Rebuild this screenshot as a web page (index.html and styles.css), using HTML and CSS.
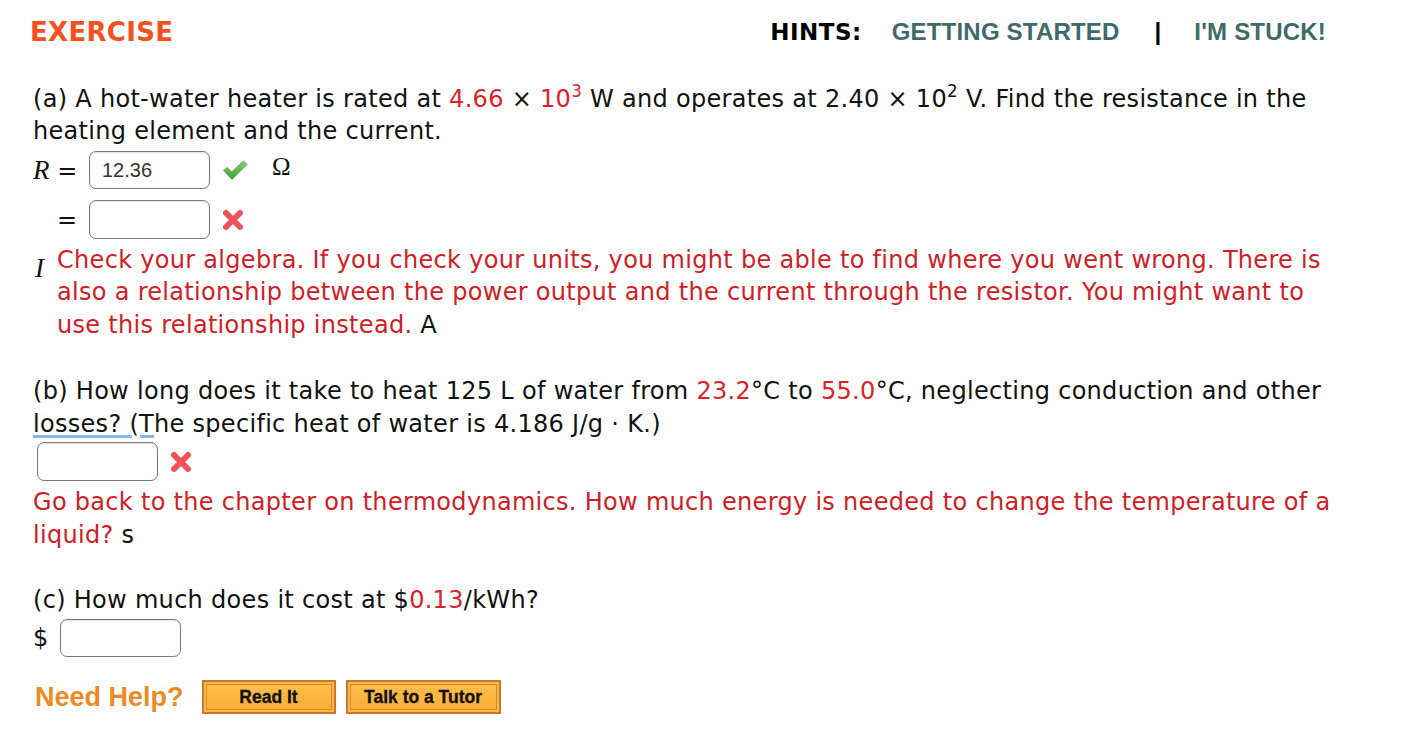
FILE: index.html
```html
<!DOCTYPE html>
<html>
<head>
<meta charset="utf-8">
<link rel="stylesheet" href="styles.css">
</head>
<body>
<div class="page">
  <header class="top">
    <div class="title">EXERCISE</div>
    <div class="hints">
      <span class="hints-label">HINTS:</span>
      <span class="hint-link">GETTING STARTED</span>
      <span class="sep">|</span>
      <span class="hint-link">I'M STUCK!</span>
    </div>
  </header>

  <p class="q q-a">(a) A hot-water heater is rated at <span class="red">4.66</span> × <span class="red">10<sup>3</sup></span> W and operates at 2.40 × 10<sup>2</sup> V. Find the resistance in the heating element and the current.</p>

  <div class="row row-r">
    <div class="lbl"><span class="var">R</span> =</div>
    <div class="box"><span class="val">12.36</span></div>
    <svg class="icon check" viewBox="0 0 26 22" width="26" height="22"><defs><linearGradient id="gc" x1="0" y1="0" x2="0" y2="1"><stop offset="0" stop-color="#8fd07a"/><stop offset="1" stop-color="#3f9a3a"/></linearGradient></defs><path d="M1.5 11.5 L5.5 8.5 L9.5 13 L21.5 2 L25 5.5 L10 20.5 Z" fill="url(#gc)" stroke="#4a9d45" stroke-width="0.8" stroke-linejoin="round"/></svg>
    <span class="unit">Ω</span>
  </div>

  <div class="row row-i">
    <div class="lbl">=</div>
    <div class="box"></div>
    <svg class="icon cross" viewBox="0 0 22 22" width="22" height="22"><path d="M4 4 L18 18 M18 4 L4 18" stroke="#f0525c" stroke-width="6" stroke-linecap="round"/></svg>
  </div>

  <div class="hint-block">
    <div class="ilabel"><span class="var">I</span></div>
    <div class="red-text hint-text">Check your algebra. If you check your units, you might be able to find where you went wrong. There is also a relationship between the power output and the current through the resistor. You might want to use this relationship instead. <span class="blk">A</span></div>
  </div>

  <p class="q q-b">(b) How long does it take to heat 125 L of water from <span class="red">23.2</span>°C to <span class="red">55.0</span>°C, neglecting conduction and other <span class="spell">losses? (T</span>he specific heat of water is 4.186 J/g · K.)</p>

  <div class="row row-b">
    <div class="box"></div>
    <svg class="icon cross" viewBox="0 0 22 22" width="22" height="22"><path d="M4 4 L18 18 M18 4 L4 18" stroke="#f0525c" stroke-width="6" stroke-linecap="round"/></svg>
  </div>

  <p class="red-text fb-b">Go back to the chapter on thermodynamics. How much energy is needed to change the temperature of a liquid? <span class="blk">s</span></p>

  <p class="q q-c">(c) How much does it cost at $<span class="red">0.13</span>/kWh?</p>

  <div class="row row-c">
    <span class="dollar">$</span>
    <div class="box"></div>
  </div>

  <div class="help">
    <span class="need">Need Help?</span>
    <span class="btn btn-read">Read It</span>
    <span class="btn btn-tutor">Talk to a Tutor</span>
  </div>
</div>
</body>
</html>
```

FILE: styles.css
```css
* { box-sizing: border-box; }

body {
  margin: 0;
  background: #ffffff;
  color: #111111;
  font-family: "DejaVu Sans", Verdana, sans-serif;
  font-size: 24px;
}

.page {
  padding: 16px 0 0 33px;
  width: 1360px;
}

.q, .red-text {
  letter-spacing: 0.3px;
}

.top {
  display: flex;
  align-items: center;
  height: 32px;
}

.title {
  margin-left: -3px;
  font-family: "DejaVu Sans", Verdana, sans-serif;
  font-weight: bold;
  font-size: 26px;
  letter-spacing: 0.3px;
  color: #f4511e;
}

.hints {
  margin-left: auto;
  margin-right: 34px;
  display: flex;
  align-items: center;
  font-family: "Liberation Sans", Arial, sans-serif;
  font-weight: bold;
  font-size: 24px;
}

.hints-label {
  font-family: "DejaVu Sans", Verdana, sans-serif;
  font-size: 23px;
  letter-spacing: 0.5px;
  color: #000;
  margin-right: 30px;
}

.hint-link {
  color: #3e6a6a;
  letter-spacing: 0.2px;
}

.sep {
  color: #000;
  margin: 0 33px 0 35px;
}

.q {
  margin: 0;
  line-height: 32.5px;
}

.q-a { margin-top: 34.5px; }

sup {
  font-size: 0.7em;
  line-height: 0;
  vertical-align: 0.62em;
}

.red { color: #d9232a; }
.blk { color: #111; }

.row {
  display: flex;
  align-items: center;
  height: 38px;
}

.row-r { margin-top: 3.5px; }
.row-i { margin-top: 11px; height: 39px; }

.lbl {
  width: 44px;
  flex: none;
  white-space: nowrap;
  text-align: right;
  margin-right: 12px;
  font-size: 24px;
}

.var {
  font-family: "Liberation Serif", "Times New Roman", serif;
  font-style: italic;
  font-size: 27px;
}

.box {
  width: 121px;
  flex: none;
  height: 100%;
  border: 1px solid #7a7a7a;
  border-radius: 7px;
  background: #fff;
  box-shadow: inset 0 1px 2px rgba(0,0,0,0.12);
  display: flex;
  align-items: center;
  padding-left: 12px;
}

.val {
  font-family: "Liberation Sans", Arial, sans-serif;
  font-size: 20px;
  color: #333;
}

.icon { margin-left: 12px; flex: none; }

.unit {
  margin-left: 24px;
  font-family: "Liberation Serif", "Times New Roman", serif;
  font-size: 25px;
  margin-top: -6px;
}

.hint-block {
  display: flex;
  margin-top: 4.5px;
}

.ilabel {
  width: 24px;
  flex: none;
  padding-top: 8px;
  padding-left: 2px;
  line-height: 32.5px;
}

.red-text {
  color: #cf2027;
  line-height: 32.5px;
  margin: 0;
}

.hint-text {
  max-width: 1280px;
}

.q-b { margin-top: 34px; }

.spell {
  text-decoration: underline;
  text-decoration-color: #8ab6e6;
  text-decoration-thickness: 3px;
  text-underline-offset: 3px;
}

.row-b { margin-top: 2px; height: 39px; padding-left: 4px; }

.fb-b { margin-top: 5px; }

.q-c { margin-top: 33px; }

.row-c { margin-top: 2.5px; }

.dollar {
  width: 27px;
  flex: none;
}

.help {
  display: flex;
  align-items: center;
  margin-top: 23px;
  padding-left: 2px;
}

.need {
  font-family: "Liberation Sans", Arial, sans-serif;
  font-weight: bold;
  font-size: 27px;
  color: #ec8a24;
  margin-right: 18px;
}

.btn {
  display: flex;
  align-items: center;
  justify-content: center;
  height: 34px;
  border: 2px solid #c7792a;
  background: linear-gradient(#ffc04e, #fbab33);
  box-shadow: inset 0 0 0 2px #fdb845, inset 0 0 0 3px #cf8a34;
  font-family: "Liberation Sans", Arial, sans-serif;
  font-weight: bold;
  font-size: 17.5px;
  -webkit-text-stroke: 0.3px #111;
  color: #111;
}

.btn-read { width: 134px; margin-right: 10px; }
.btn-tutor { width: 155px; }
```
